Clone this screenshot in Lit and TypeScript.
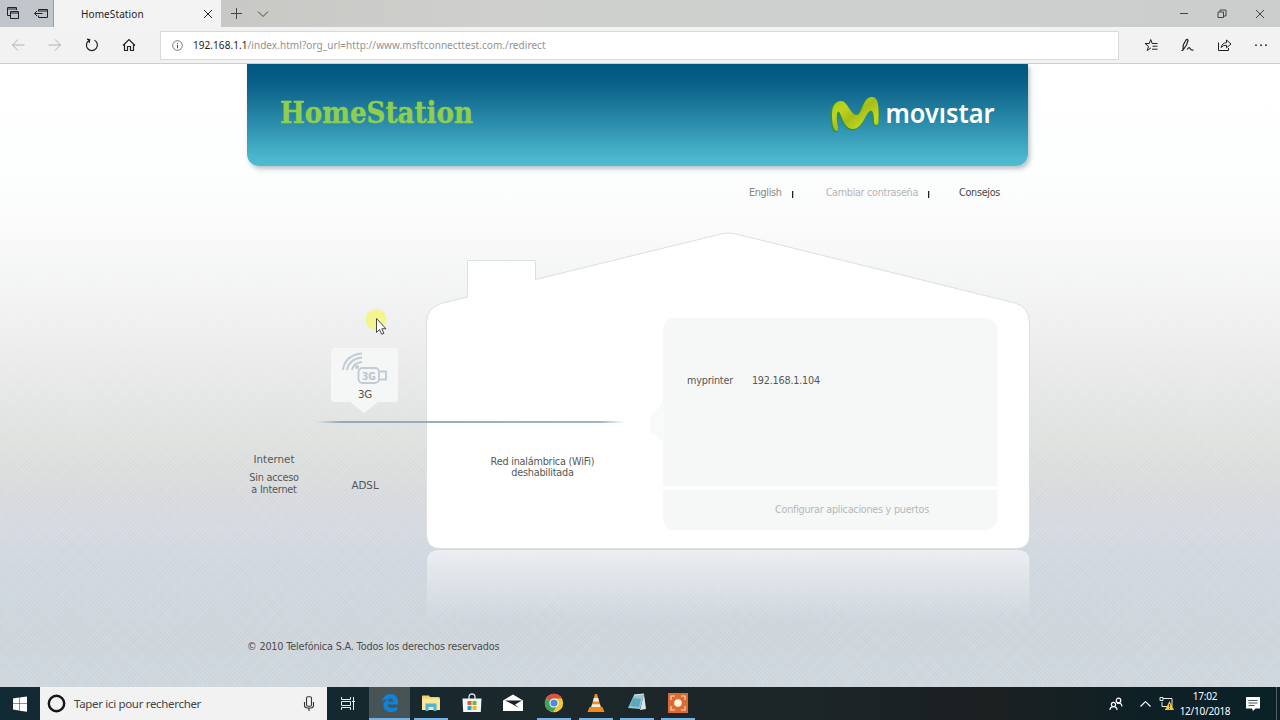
import { LitElement, html, css, svg } from "lit";
import { customElement } from "lit/decorators.js";

@customElement("browser-chrome")
class BrowserChrome extends LitElement {
  static styles = css`
    :host { display: block; font-family: "Noto Sans", "Open Sans", sans-serif; color: #222; }
    svg { display: block; fill: none; stroke: #222; stroke-width: 1; flex: none; }
    .tabs { display: flex; height: 27px; background: linear-gradient(90deg, #bfc5cb 0, #c9c9c6 20%, #cfd0cd 40%, #cdd0cf 70%, #cbcdcd 100%); }
    .sets { display: flex; align-items: center; width: 54px; box-sizing: border-box; padding-left: 7px; gap: 14px; border-right: 1px solid #999da1; }
    .tab { display: flex; align-items: center; justify-content: space-between; width: 167px; box-sizing: border-box; padding: 0 8px 0 27px; background: #f3f3f3; font-size: 10px; letter-spacing: 0.1px; }
    .new { display: flex; align-items: center; gap: 14px; padding-left: 9px; flex: 1; }
    .new svg, .win svg { stroke: #444; }
    .win { display: flex; align-items: center; gap: 28px; padding-right: 15px; }
    .bar { display: flex; align-items: center; height: 37px; box-sizing: border-box; border-bottom: 1px solid #cfcfcf; background: #f2f2f2; }
    .nav { display: flex; align-items: center; gap: 20px; padding-left: 11px; width: 149px; }
    .url { display: flex; align-items: center; gap: 10px; width: 959px; height: 29px; box-sizing: border-box; border: 1px solid #d9d9d9; background: #fff; padding-left: 11px; font-size: 10px; color: #929292; white-space: nowrap; letter-spacing: 0.06px; }
    .host { color: #222; }
    .tools { display: flex; align-items: center; gap: 21px; padding-left: 25px; }
    .faint { stroke: #b0b0b0; }
  `;
  render() {
    return html`
      <div class="tabs">
        <div class="sets">
          <svg width="13" height="13" viewBox="0 0 13 13"><path d="M3 8.500H.5v-8h9V3M1 2h8M3.500 4.500h8v7h-8zM4 6h7" /></svg>
          <svg width="14" height="13" viewBox="0 0 14 13"><path d="M4.500 4.500v-2h9v8h-9V8.500M5 4h8M.5 6.500h8M3 4 .5 6.500 3 9" /></svg>
        </div>
        <div class="tab">
          <span>HomeStation</span>
          <svg width="10" height="10" viewBox="0 0 10 10"><path d="m1 1 8 8M9 1 1 9" /></svg>
        </div>
        <div class="new">
          <svg width="13" height="13" viewBox="0 0 13 13"><path d="M6.500 1v11M1 6.500h11" /></svg>
          <svg width="12" height="8" viewBox="0 0 12 8"><path d="m1 1.500 5 5 5-5" /></svg>
        </div>
        <div class="win">
          <svg width="10" height="10" viewBox="0 0 10 10"><path d="M1 4.500h8" /></svg>
          <svg width="10" height="10" viewBox="0 0 10 10"><path d="M1 3h5.500v5.500H1zM3 3V1h6v6H7" /></svg>
          <svg width="10" height="10" viewBox="0 0 10 10"><path d="m1 1 8 8M9 1 1 9" /></svg>
        </div>
      </div>
      <div class="bar">
        <div class="nav">
          <svg class="faint" width="14" height="14" viewBox="0 0 14 14"><path d="M13.500 7H1.500M7 1.500 1.500 7 7 12.500" /></svg>
          <svg class="faint" width="14" height="14" viewBox="0 0 14 14" transform="translate(3)"><path d="M.5 7h12M7 1.500 12.500 7 7 12.500" /></svg>
          <svg width="14" height="14" viewBox="0 0 14 14" transform="translate(6)"><path d="M9.500 2.200A5.500 5.500 0 1 1 4 2.400M2 1.200l2.700.6-.6 3" stroke-width="1.200" /></svg>
          <svg width="14" height="14" viewBox="0 0 14 14" transform="translate(9)"><path d="m1 7.500 6-6 6 6M2.500 6.500v6h3v-4h3v4h3v-6" stroke-width="1.200" /></svg>
        </div>
        <div class="url">
          <svg width="11" height="11" viewBox="0 0 11 11"><circle cx="5.500" cy="5.500" r="4.800" stroke="#555" stroke-width=".8" /><path d="M5.500 4.700v3.500M5.500 2.800v1" stroke="#444" /></svg>
          <span><span class="host">192.168.1.1</span>/index.html?org_url=http://www.msftconnecttest.com./redirect</span>
        </div>
        <div class="tools">
          <svg width="15" height="14" viewBox="0 0 15 14"><path d="M7 9.800 3.300 12.500l1.200-4.300L1 5.500h4.300L6.700 1.500 8.200 5.500h5.300M8.500 8.200h5M8 11.200h5.500" /></svg>
          <svg width="16" height="14" viewBox="0 0 16 14"><path d="M3 11.500 3.300 7 6 2q1.500-1.500 2 .5L6.500 7 3 12l-1.500.7M7 11.500q2-3 3-1t3.500 1.500" stroke-width="1.200" /></svg>
          <svg width="15" height="14" viewBox="0 0 15 14"><path d="M1.500 4.500v8h10V10M4 9.500Q5 5 9.500 4.700V2L14 6l-4.500 3.800V7.300Q6 7 4 9.500z" /></svg>
          <svg width="14" height="14" viewBox="0 0 14 14"><g fill="#222" stroke="none"><circle cx="3" cy="7.200" r=".9" /><circle cx="8" cy="7.200" r=".9" /><circle cx="13" cy="7.200" r=".9" /></g></svg>
        </div>
      </div>
    `;
  }
}

@customElement("router-page")
class RouterPage extends LitElement {
  static styles = css`
    :host {
      display: block; overflow: hidden; box-sizing: border-box; padding-left: 247px;
      font-family: "DejaVu Sans", Verdana, sans-serif; font-size: 9.700px; letter-spacing: -0.220px; line-height: 12px; color: #555757;
      background:
        repeating-linear-gradient(45deg, rgba(255, 255, 255, 0.08) 0 1px, transparent 1px 3px),
        repeating-linear-gradient(-45deg, rgba(255, 255, 255, 0.08) 0 1px, transparent 1px 3px),
        linear-gradient(180deg, #fff 0, #fdfefe 17%, #fafafa 27%, #f4f5f5 34%, #ecedec 45%, #e4e6e5 54%, #dddfdd 62%, #d6d8dc 70%, #d4d8e0 75%, #cfd6de 80%, #ccd4da 92%, #cdd5dc 100%);
    }
    .banner { display: flex; justify-content: space-between; width: 781px; height: 102px; border-radius: 0 0 12px 12px; background: linear-gradient(180deg, #005780 0, #065d87 16%, #1c7799 40%, #3195b3 65%, #4cb8cf 93%, #4fbbd1 100%); box-shadow: 2px 3px 4px rgba(90, 110, 120, 0.4); }
    .title, .logo { display: block; flex: none; letter-spacing: 0; }
    .links { display: flex; align-items: center; height: 12px; padding: 21px 28px 0 0; width: 753px; justify-content: flex-end; letter-spacing: -0.320px; }
    .bar { width: 1px; height: 7px; background: #222; box-shadow: 1px 0 #9999; margin: 2px 30px 0 10px; }
    .bar.wide { margin-right: 33px; }
    .en { color: #858585; }
    .pw { color: #b5b5b5; }
    .tips { color: #484848; }
    .scene { display: grid; grid-template-columns: 54px 126px 603px; width: 783px; height: 390px; padding-top: 33px; position: relative; }
    .net { padding-top: 221px; text-align: center; white-space: nowrap; }
    .net p, .foot { margin: 0; }
    .net .label { font-size: 10.300px; letter-spacing: 0; }
    .net .state { margin-top: 7px; }
    .adsl { display: flex; flex-direction: column; align-items: center; padding: 116px 0 0 2px; }
    .adsl .name { padding-top: 66px; font-size: 10.300px; letter-spacing: 0; }
    .house { display: grid; }
    .shape, .inside { grid-area: 1 / 1; }
    .shape { overflow: visible; }
    .inside { display: grid; grid-template-columns: 231px 353px; padding-top: 86px; }
    .wifi { text-align: center; line-height: 11px; padding-top: 138px; }
    .card { display: flex; flex-direction: column; gap: 4px; width: 334px; height: 212px; margin-left: 5px; position: relative; }
    .devices { height: 168px; box-sizing: border-box; border-radius: 12px 12px 0 0; background: #f6f8f8; padding: 57px 24px 0; display: flex; gap: 19px; box-shadow: 0 0 2px #f6f8f8; }
    .ports { flex: 1; border-radius: 0 0 12px 12px; background: #f6f8f8; text-align: right; padding: 14px 68px 0 0; color: #b5b8b8; box-shadow: 0 0 2px #f6f8f8; letter-spacing: -0.270px; }
    .notch { position: absolute; left: -14px; top: 84px; }
    .wire { position: absolute; left: 69px; top: 222px; width: 309px; height: 2px; background: linear-gradient(90deg, transparent, #8eacbb 8%, #9bb8c4 92%, transparent); }
    .pointer { position: absolute; left: 118px; top: 109px; }
    .foot { padding-top: 19px; letter-spacing: -0.180px; color: #4c4c4c; }
  `;
  render() {
    return html`
      <div class="banner">
        <svg class="title" width="260" height="102"><text x="33" y="58.500" textLength="193" lengthAdjust="spacingAndGlyphs" font-family="DejaVu Serif" font-weight="700" font-size="30" fill="#8fce4e" stroke="#8fce4e" stroke-width=".5">HomeStation</text></svg>
        <svg class="logo" width="200" height="102">
          <defs>
            <linearGradient id="m" x1="0" x2="1" y1="0" y2="1"><stop offset="0" stop-color="#a0c81a" /><stop offset=".3" stop-color="#c0d31d" /><stop offset=".5" stop-color="#a5bd1a" /><stop offset=".75" stop-color="#c3d821" /><stop offset="1" stop-color="#a4cc1c" /></linearGradient>
          </defs>
          <path d="M9 67C5 67 4 58 4 50C4 42 8 37 13 37C20 37 22 51 29 51C34 51 35 33 44 33C51 33 51 44 50.500 58C50.500 62 46 62 46 58C46 52 45.500 47 43 46.500C38 47 35 65 25 65C15 65 13 47.500 10.500 47.500C8 48 8.500 56 10 63Q10 67 9 67Z" fill="#2f962d" stroke="#2f962d" stroke-width="1.500" transform="translate(-.7 .5)" />
          <path d="M9 67C5 67 4 58 4 50C4 42 8 37 13 37C20 37 22 51 29 51C34 51 35 33 44 33C51 33 51 44 50.500 58C50.500 62 46 62 46 58C46 52 45.500 47 43 46.500C38 47 35 65 25 65C15 65 13 47.500 10.500 47.500C8 48 8.500 56 10 63Q10 67 9 67Z" fill="url(#m)" />
          <text x="57.500" y="58.500" textLength="109" lengthAdjust="spacingAndGlyphs" font-family="Noto Sans" font-weight="600" font-size="26.500" fill="#fff">movıstar</text>
        </svg>
      </div>
      <nav class="links"><span class="en">English</span><i class="bar wide"></i><span class="pw">Cambiar contraseña</span><i class="bar"></i><span class="tips">Consejos</span></nav>
      <main class="scene">
        <section class="net"><p class="label">Internet</p><p class="state">Sin acceso<br />a Internet</p></section>
        <section class="adsl">
          <svg width="68" height="65" viewBox="0 0 68 65">
            <path d="M4 0H64Q67 0 67 4V50Q67 54 64 54H47L33 65 19 54H4Q0 54 0 50V4Q0 0 4 0Z" fill="#f5f7f7" />
            <g fill="none" stroke="#c3ccd4" stroke-width="1.900"><path d="M12 22Q14 7 31 5.500M16 22Q18 11 31 9.500M21 22Q22 15 31 14" /><rect x="27.500" y="20" width="20.500" height="15" rx="4" /><path d="M48 23.500h7v8h-7" /></g>
            <circle cx="26" cy="19" r="2" fill="#c3ccd4" />
            <text x="31" y="31.500" textLength="13.500" lengthAdjust="spacingAndGlyphs" font-family="DejaVu Sans" font-weight="700" font-size="10.500" fill="#b9c4cf">3G</text>
            <text x="27" y="50" textLength="14" font-family="DejaVu Sans" font-size="10.300" fill="#555">3G</text>
          </svg>
          <span class="name">ADSL</span>
        </section>
        <section class="house">
          <svg class="shape" width="603" height="390" viewBox="0 0 603 390">
            <defs><linearGradient id="r" x1="0" x2="0" y1="0" y2="1"><stop offset="0" stop-color="#fff" stop-opacity=".55" /><stop offset="1" stop-color="#fff" stop-opacity="0" /></linearGradient></defs>
            <path d="M0 388V328Q1 317.500 12 318H590Q602 317.500 602.500 328V388Z" fill="url(#r)" />
            <path d="M-.5 303V90Q0 76 14 71.500L40.500 65V28.500H108.500V47.500L294 2Q301 0 309 2L588 71Q602 75 602.500 91V304Q602 316.500 589 316.500H13Q0 316.500 -.5 303Z" fill="#fff" stroke="#dbe0e0" />
          </svg>
          <div class="inside">
            <div class="wifi">Red inalámbrica (WiFi)<br />deshabilitada</div>
            <div class="card">
              <svg class="notch" width="15" height="42" viewBox="0 0 15 42"><path d="M15 0Q10 6 3 12Q-2 22 3 31Q11 36 15 42Z" fill="#f8fafa" /></svg>
              <div class="devices"><span>myprinter</span><span>192.168.1.104</span></div>
              <div class="ports">Configurar aplicaciones y puertos</div>
            </div>
          </div>
        </section>
        <div class="wire"></div>
        <svg class="pointer" width="22" height="30" viewBox="0 0 22 30"><circle cx="11" cy="11.500" r="10.500" fill="#f5f48e" /><path d="M11.500 10.500v14l3-3 2.200 4.800 2.200-1-2.100-4.500H21Z" fill="#fff" stroke="#333" stroke-width=".9" /></svg>
      </main>
      <p class="foot">© 2010 Telefónica S.A. Todos los derechos reservados</p>
    `;
  }
}

const apps = [
  { on: true, active: true, art: svg`<path d="M2 9C3 3 7 1 10.500 1 15 1 18 4.500 18 9v2.500H7.500C8 16 14 15.500 17 13.800v3.700C11 20.500 3.500 19 3.500 12.500 3.500 9 6 7 8 6 4.500 6 3 7.500 2 9M7.700 8.500h5.600C13 4.500 8.200 4.500 7.700 8.500" fill="#0f83d8" fill-rule="evenodd"/>` },
  { on: true, art: svg`<path d="M1 2.500h7l1 1.500h9.500V17H1z" fill="#f4d06f"/><path d="M1 5.500h18V17H1z" fill="#fbe59b"/><path d="M4.500 18v-7.500h11V18h-3v-4h-5v4z" fill="#50b4d8"/>` },
  { on: false, art: svg`<path d="M7 6V4q0-3 3-3t3 3v2" fill="none" stroke="#ddd" stroke-width="1.300"/><path d="M.5 5.500h19L18.800 19H1.200z" fill="#f5f5f5"/><path d="M5.500 8h4v4h-4z" fill="#e4572e"/><path d="M10.500 8h4v4h-4z" fill="#78b733"/><path d="M5.500 13h4v4h-4z" fill="#25a0da"/><path d="M10.500 13h4v4h-4z" fill="#f5b82e"/>` },
  { on: false, art: svg`<path d="M0 7.500 10 1.500 20 7.500V18H0z" fill="#fff"/><path d="M2 7.500h17l-7 4 4 3.500L9 11z" fill="#172024"/>` },
  { on: true, art: svg`<circle cx="10" cy="10" r="9.200" fill="#f3c934"/><path d="M10 10 2 5.500A9.200 9.200 0 0 1 18 5.500H10z" fill="#dd5144"/><path d="M10 10 2 5.500A9.200 9.200 0 0 0 9 19.100L13.500 12z" fill="#41a35a"/><circle cx="10" cy="10" r="4.600" fill="#fff"/><circle cx="10" cy="10" r="3.600" fill="#4b8bea"/>` },
  { on: true, art: svg`<path d="M3.500 14h13l2 5h-17z" fill="#ef8a17"/><path d="m9 1h2l4.500 15q-5.500 2-11 0z" fill="#f28c1b"/><path d="m7.900 5h4.200l1 3.500H6.900zM6.100 11.200h7.800l.8 2.800H5.300z" fill="#eee"/>` },
  { on: true, art: svg`<path d="m7 2 10-1-4 15-12-1z" fill="#8fc9d5"/><path d="m17 1 2 15-6 1z" fill="#dce6e6"/><path d="m6 5 8 1-2 8-9-1z" fill="#5da9bb"/><path d="M7 2 17 1" stroke="#eee"/>` },
  { on: true, art: svg`<path d="M0 0h20v20H0z" fill="#dc6a35"/><circle cx="10" cy="10" r="3.800" fill="#fff8dd"/><path d="M3 7V3h4M13 3h4v4M17 13v4h-4M7 17H3v-4" fill="none" stroke="#ffd8b8" stroke-width="1.200"/>` },
];

@customElement("task-bar")
class TaskBar extends LitElement {
  static styles = css`
    :host { display: flex; height: 33px; background: linear-gradient(90deg, #122a33 0, #15282f 28%, #1d282b 45%, #1b2427 65%, #1c2021 78%, #0d2026 90%, #0a2128 100%); color: #fff; font-family: "Noto Sans", "Open Sans", sans-serif; }
    svg { display: block; flex: none; }
    .start { display: grid; place-items: center; width: 40px; }
    .search { display: flex; align-items: center; width: 287px; box-sizing: border-box; padding: 0 12px 0 7px; background: #f2f2f2; color: #444; font-size: 11.500px; }
    .hint { flex: 1; padding-left: 8px; letter-spacing: -0.32px; }
    .view { display: grid; place-items: center; width: 42px; }
    .app { display: grid; place-items: center; width: 41.200px; grid-template-rows: 31px 2px; }
    .app i { display: block; width: 34px; height: 2px; background: #76b2e4; }
    .app.active { background: #485356; }
    .app.active i { width: 41px; }
    .app i.off { background: transparent; }
    .tray { display: flex; align-items: center; margin-left: auto; }
    .clock { width: 62px; margin: 0 10px 0 0; text-align: center; font-size: 10px; line-height: 15px; letter-spacing: -0.25px; white-space: nowrap; }
    .peek { width: 1px; height: 33px; background: #526066; margin: 0 3px 0 16px; }
  `;
  render() {
    return html`
      <div class="start"><svg width="16" height="16" viewBox="0 0 16 16" fill="#fff"><path d="m1 2.500 6-1v6H1zM7.500 1.400l7.500-1v7.100H7.500zM1 8h6v6.500l-6-1zM7.500 8H15v7.700l-7.500-1z" /></svg></div>
      <div class="search">
        <svg width="19" height="19" viewBox="0 0 19 19"><circle cx="9.500" cy="9.500" r="7.700" fill="none" stroke="#151515" stroke-width="2.400" /></svg>
        <span class="hint">Taper ici pour rechercher</span>
        <svg width="12" height="15" viewBox="0 0 12 15" fill="none" stroke="#333" stroke-width="1.100"><rect x="3.500" y=".7" width="5" height="9.500" rx="1.500" /><path d="M1.500 6v3.500q0 2.500 3 2.500h3q3 0 3-2.500V6M6 12v3" /></svg>
      </div>
      <div class="view"><svg width="15" height="15" viewBox="0 0 15 15" fill="none" stroke="#e8eeee"><path d="M.5 1v2.500h9V1M.5 5.500h9v4h-9zM.5 14v-2.500h9V14M12.500 1v13M11 5.500h3" /></svg></div>
      ${apps.map((a) => html`<div class="app ${a.active ? "active" : ""}"><svg width="20" height="20" viewBox="0 0 20 20">${a.art}</svg><i class=${a.on ? "" : "off"}></i></div>`)}
      <div class="tray">
        <svg width="14" height="14" viewBox="0 0 14 14" fill="none" stroke="#fff" stroke-width="1.200"><circle cx="9.500" cy="3.500" r="2.300" /><circle cx="4.500" cy="7.500" r="2.100" /><path d="M1 13q0-3.300 3.500-3.300T8 13M8 6.500q4.500-1.500 5 3" /></svg>
        <svg width="51" height="16" viewBox="0 0 51 16"><path d="m17.500 10.500 5-5 5 5" fill="none" stroke="#fff" stroke-width="1.100" /><g transform="translate(36)"><path d="M4 2.500h9v8H3V6M1 1.500h3v3H1zM6 13.500h3" fill="none" stroke="#e5eaea" /><path d="m10.500 5 4.500 9H6z" fill="#f7c52d" /><path d="M10.500 8v3m0 1v1" stroke="#333" /></g></svg>
        <div class="clock">17:02<br />12/10/2018</div>
        <svg width="14" height="14" viewBox="0 0 14 14"><path d="M0 0h14v11.500H9.500L7 14l-1-2.500H0z" fill="#fff" /><path d="M2.500 3.500h9M2.500 6h9M2.500 8.500h6" stroke="#33464c" stroke-width=".9" /></svg>
        <div class="peek"></div>
      </div>
    `;
  }
}

@customElement("app-root")
class AppRoot extends LitElement {
  static styles = css`
    :host { display: flex; flex-direction: column; width: 1280px; height: 720px; overflow: hidden; }
    .page { flex: 1; min-height: 0; }
  `;
  render() {
    return html`<browser-chrome></browser-chrome><router-page class="page"></router-page><task-bar></task-bar>`;
  }
}
